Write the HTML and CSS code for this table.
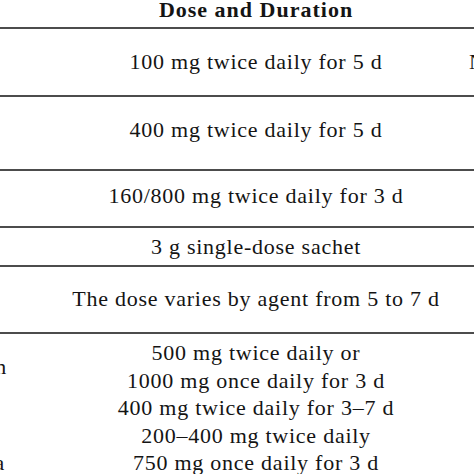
FILE: index.html
```html
<!DOCTYPE html>
<html>
<head>
<meta charset="utf-8">
<link rel="stylesheet" href="styles.css">
</head>
<body>
<div class="tbl">
  <div class="row head">
    <div class="cell left"></div>
    <div class="cell mid"><b>Dose and Duration</b></div>
    <div class="cell right"></div>
  </div>
  <div class="row r1">
    <div class="cell left"></div>
    <div class="cell mid">100 mg twice daily for 5 d</div>
    <div class="cell right">N</div>
  </div>
  <div class="row r2">
    <div class="cell left"></div>
    <div class="cell mid">400 mg twice daily for 5 d</div>
    <div class="cell right"></div>
  </div>
  <div class="row r3">
    <div class="cell left"></div>
    <div class="cell mid">160/800 mg twice daily for 3 d</div>
    <div class="cell right"></div>
  </div>
  <div class="row r4">
    <div class="cell left"></div>
    <div class="cell mid">3 g single-dose sachet</div>
    <div class="cell right"></div>
  </div>
  <div class="row r5">
    <div class="cell left"></div>
    <div class="cell mid">The dose varies by agent from 5 to 7 d</div>
    <div class="cell right"></div>
  </div>
  <div class="row r6">
    <div class="cell left stack">
      <div class="drug first">Ciprofloxacin</div>
      <div class="drug last">Ofloxacina</div>
    </div>
    <div class="cell mid stack">
      <div>500 mg twice daily or</div>
      <div>1000 mg once daily for 3 d</div>
      <div>400 mg twice daily for 3–7 d</div>
      <div>200–400 mg twice daily</div>
      <div>750 mg once daily for 3 d</div>
    </div>
    <div class="cell right"></div>
  </div>
</div>
</body>
</html>
```
FILE: styles.css
```css
html, body {
  margin: 0;
  padding: 0;
  background: #ffffff;
  overflow: hidden;
}
body {
  width: 474px;
  height: 474px;
  font-family: "Liberation Serif", "Times New Roman", serif;
  font-size: 22px;
  color: #141414;
  letter-spacing: 0.75px;
}
.tbl {
  margin-left: -200px;
  width: 752px;
}
.row {
  display: grid;
  grid-template-columns: 260px 392px 100px;
  align-items: center;
  border-top: 2px solid #4c4c4c;
  box-sizing: border-box;
}
.head {
  border-top: none;
  height: 27px;
  align-items: start;
}
.head b {
  display: block;
  line-height: 20px;
  letter-spacing: 1px;
}
.r1 { height: 68px; padding-bottom: 1px; }
.r2 { height: 74px; padding-bottom: 7px; }
.r3 { height: 57px; padding-bottom: 6px; }
.r4 { height: 39px; padding-top: 1px; }
.r5 { height: 67px; padding-bottom: 2px; }
.r6 { height: 160px; align-items: start; }
.cell {
  white-space: nowrap;
  line-height: 24px;
}
.mid {
  text-align: center;
}
.left {
  text-align: right;
  padding-right: 53px;
  overflow: hidden;
}
.right {
  padding-left: 17px;
}
.stack {
  line-height: 27.5px;
  padding-top: 5px;
}
.drug.first {
  padding-top: 14px;
}
.drug.last {
  margin-top: 68px;
  padding-right: 2px;
}
```
